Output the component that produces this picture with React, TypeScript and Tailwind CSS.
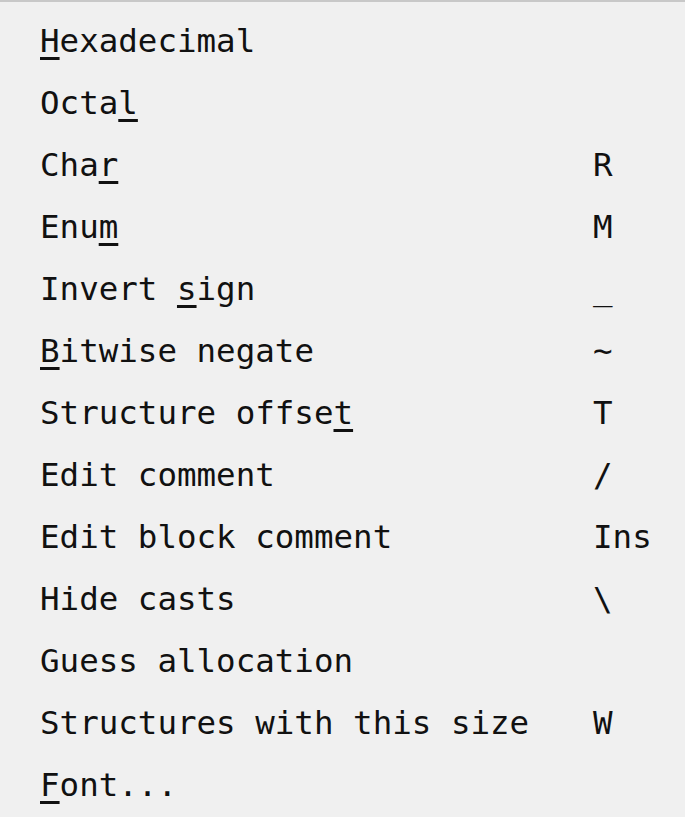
const items: { label: string; key?: number; shortcut?: string }[] = [
  { label: "Hexadecimal", key: 0 },
  { label: "Octal", key: 4 },
  { label: "Char", key: 3, shortcut: "R" },
  { label: "Enum", key: 3, shortcut: "M" },
  { label: "Invert sign", key: 7, shortcut: "_" },
  { label: "Bitwise negate", key: 0, shortcut: "~" },
  { label: "Structure offset", key: 15, shortcut: "T" },
  { label: "Edit comment", shortcut: "/" },
  { label: "Edit block comment", shortcut: "Ins" },
  { label: "Hide casts", shortcut: "\\" },
  { label: "Guess allocation" },
  { label: "Structures with this size", shortcut: "W" },
  { label: "Font...", key: 0 },
];

function Label({ text, k }: { text: string; k?: number }) {
  if (k === undefined) return <>{text}</>;
  return (
    <>
      {text.slice(0, k)}
      <span className="underline decoration-[3px] underline-offset-[5px]">{text[k]}</span>
      {text.slice(k + 1)}
    </>
  );
}

export default function App() {
  return (
    <div className="w-[685px] h-[817px] bg-[#f0f0f0] border-t-2 border-[#c8c8c8] pt-[8px] text-[#111] font-['DejaVu_Sans_Mono','Liberation_Mono',monospace] text-[32.5px] overflow-hidden">
      {items.map((it) => (
        <div key={it.label} className="flex h-[62px] leading-[62px] pl-[40px] whitespace-pre">
          <span className="w-[553px]">
            <Label text={it.label} k={it.key} />
          </span>
          <span>{it.shortcut}</span>
        </div>
      ))}
    </div>
  );
}
